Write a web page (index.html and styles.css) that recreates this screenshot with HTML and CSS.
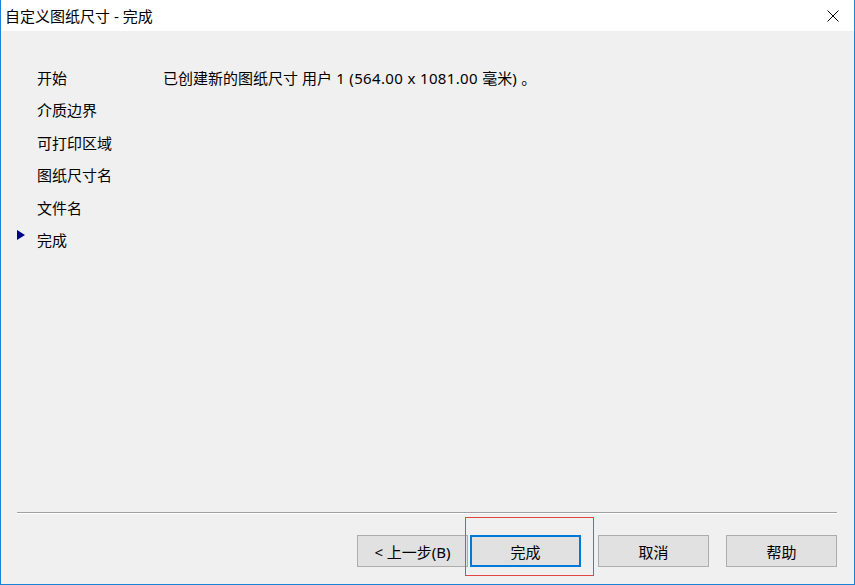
FILE: index.html
```html
<!DOCTYPE html>
<html lang="zh-CN">
<head>
<meta charset="utf-8">
<title>自定义图纸尺寸 - 完成</title>
<link rel="stylesheet" href="styles.css">
</head>
<body>
<div class="window">
  <div class="titlebar">
    <span class="title">自定义图纸尺寸 - 完成</span>
    <button class="close" aria-label="关闭">
      <svg width="12" height="12" viewBox="0 0 12 12"><path d="M0.5 0.5 L11.5 11.5 M11.5 0.5 L0.5 11.5" stroke="#000" stroke-width="1" fill="none"/></svg>
    </button>
  </div>
  <div class="content">
    <div class="main">
      <ul class="steps">
        <li class="step"><span class="marker"></span>开始</li>
        <li class="step"><span class="marker"></span>介质边界</li>
        <li class="step"><span class="marker"></span>可打印区域</li>
        <li class="step"><span class="marker"></span>图纸尺寸名</li>
        <li class="step"><span class="marker"></span>文件名</li>
        <li class="step current"><span class="marker"></span>完成</li>
      </ul>
      <div class="summary">
        <p class="message">已创建新的图纸尺寸 用户<span class="latin"> 1 (564.00 x 1081.00 </span>毫米<span class="latin">) </span>。</p>
      </div>
    </div>
    <div class="footer">
      <div class="separator"></div>
      <div class="buttons">
        <button class="btn">&lt; 上一步(B)</button>
        <div class="focus-wrap">
          <button class="btn default">完成</button>
          <span class="focus-ring"></span>
        </div>
        <button class="btn gap">取消</button>
        <button class="btn gap">帮助</button>
      </div>
    </div>
  </div>
</div>
</body>
</html>
```
FILE: styles.css
```css
html, body {
  margin: 0;
  padding: 0;
}

body {
  width: 855px;
  height: 585px;
  overflow: hidden;
  font-family: "Noto Sans", "Noto Sans CJK SC", sans-serif;
  font-size: 15px;
  color: #000;
}

.window {
  box-sizing: border-box;
  width: 855px;
  height: 585px;
  border: 1px solid #1883d7;
  border-top: none;
  display: flex;
  flex-direction: column;
  background: #f0f0f0;
}

.titlebar {
  height: 31px;
  flex: none;
  background: #fff;
  display: flex;
  align-items: center;
  justify-content: space-between;
  padding-left: 4px;
}

.title {
  font-size: 15px;
  line-height: 20px;
  margin-top: 1px;
}

.close {
  border: none;
  background: transparent;
  padding: 0;
  margin: 0 15px 0 0;
  width: 12px;
  height: 12px;
  display: flex;
}

.content {
  flex: 1;
  display: flex;
  flex-direction: column;
}

.main {
  flex: 1;
  display: flex;
  padding-top: 31px;
}

.steps {
  list-style: none;
  margin: 0;
  padding: 0 0 0 16px;
  width: 146px;
}

.step {
  height: 32.4px;
  line-height: 32.4px;
  display: flex;
  align-items: center;
}

.marker {
  width: 20px;
  flex: none;
  height: 10px;
}

.current .marker::before {
  content: "";
  display: block;
  width: 0;
  height: 0;
  margin-top: -5px;
  border-top: 5px solid transparent;
  border-bottom: 5px solid transparent;
  border-left: 8px solid #000080;
}

.summary {
  flex: 1;
}

.message {
  margin: 0;
  height: 32.4px;
  line-height: 32.4px;
}

.latin {
  letter-spacing: 0.35px;
}

.footer {
  flex: none;
  padding: 0 17px 17px 16px;
}

.separator {
  height: 1px;
  background: #a0a0a0;
  border-bottom: 1px solid #fff;
}

.buttons {
  margin-top: 21px;
  display: flex;
  justify-content: flex-end;
}

.btn {
  box-sizing: border-box;
  width: 111px;
  height: 32px;
  margin: 0;
  padding: 0;
  background: #e1e1e1;
  border: 1px solid #adadad;
  font-family: inherit;
  font-size: 15px;
  color: #000;
}

.btn.default {
  border: 2px solid #0078d7;
}

.btn.gap {
  margin-left: 17px;
}

.focus-wrap {
  position: relative;
  margin-left: 2px;
  display: flex;
}

.focus-ring {
  position: absolute;
  left: -5px;
  top: -18px;
  width: 129px;
  height: 59px;
  box-sizing: border-box;
  border: 1px solid #e34444;
  pointer-events: none;
}
```
